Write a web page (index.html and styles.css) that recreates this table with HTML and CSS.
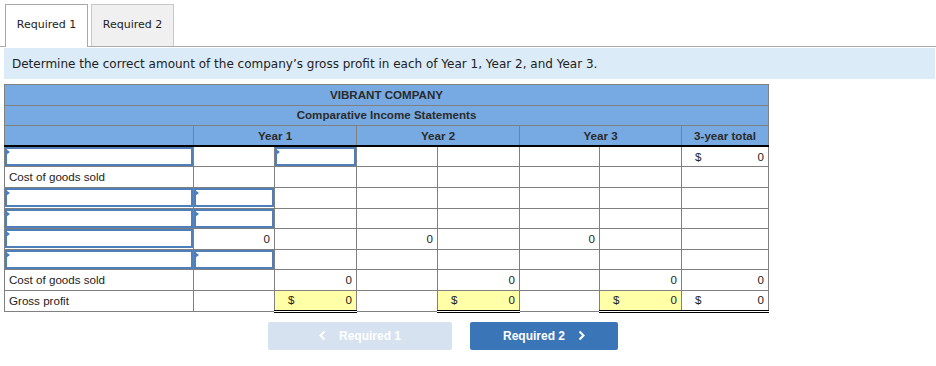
FILE: index.html
```html
<!DOCTYPE html>
<html>
<head>
<meta charset="utf-8">
<title>Gross profit</title>
<link rel="stylesheet" href="styles.css">
</head>
<body>
<div class="tabs">
  <div class="tab tab-active">Required 1</div>
  <div class="tab">Required 2</div>
</div>
<div class="instr">Determine the correct amount of the company’s gross profit in each of Year 1, Year 2, and Year 3.</div>
<table class="sheet">
  <colgroup>
    <col class="c0"><col class="c1"><col class="c2"><col class="c3"><col class="c4"><col class="c5"><col class="c6"><col class="c7">
  </colgroup>
  <tr class="hd"><th colspan="8">VIBRANT COMPANY</th></tr>
  <tr class="hd"><th colspan="8">Comparative Income Statements</th></tr>
  <tr class="hd yr"><th></th><th colspan="2">Year 1</th><th colspan="2">Year 2</th><th colspan="2">Year 3</th><th>3-year total</th></tr>
  <tr class="first">
    <td class="in"><div class="box"></div></td><td></td><td class="in"><div class="box"></div></td><td></td><td></td><td></td><td></td>
    <td><div class="amt"><span>$</span><span>0</span></div></td>
  </tr>
  <tr>
    <td class="lbl">Cost of goods sold</td><td></td><td></td><td></td><td></td><td></td><td></td><td></td>
  </tr>
  <tr>
    <td class="in"><div class="box"></div></td><td class="in"><div class="box"></div></td><td></td><td></td><td></td><td></td><td></td><td></td>
  </tr>
  <tr>
    <td class="in"><div class="box"></div></td><td class="in"><div class="box"></div></td><td></td><td></td><td></td><td></td><td></td><td></td>
  </tr>
  <tr>
    <td class="in"><div class="box"></div></td><td class="num bt">0</td><td></td><td class="num bt">0</td><td></td><td class="num bt">0</td><td></td><td></td>
  </tr>
  <tr>
    <td class="in"><div class="box"></div></td><td class="in"><div class="box"></div></td><td></td><td></td><td></td><td></td><td></td><td></td>
  </tr>
  <tr>
    <td class="lbl indent">Cost of goods sold</td><td></td><td class="num bt">0</td><td class="bt"></td><td class="num bt">0</td><td class="bt"></td><td class="num bt">0</td><td class="num bt">0</td>
  </tr>
  <tr>
    <td class="lbl">Gross profit</td><td></td>
    <td class="tot hl"><div class="amt"><span>$</span><span>0</span></div></td><td></td>
    <td class="tot hl"><div class="amt"><span>$</span><span>0</span></div></td><td></td>
    <td class="tot hl"><div class="amt"><span>$</span><span>0</span></div></td>
    <td class="tot"><div class="amt"><span>$</span><span>0</span></div></td>
  </tr>
</table>
<div class="nav">
  <button class="btn btn-off" type="button">
    <svg class="chev" width="7" height="11" viewBox="0 0 7 11"><polyline points="5.5,1.5 1.5,5.5 5.5,9.5" fill="none" stroke="#ffffff" stroke-width="2"/></svg>
    <span>Required 1</span>
  </button>
  <button class="btn btn-on" type="button">
    <span>Required 2</span>
    <svg class="chev" width="7" height="11" viewBox="0 0 7 11"><polyline points="1.5,1.5 5.5,5.5 1.5,9.5" fill="none" stroke="#ffffff" stroke-width="2"/></svg>
  </button>
</div>
</body>
</html>
```
FILE: styles.css
```css
* { box-sizing: border-box; }
body {
  margin: 0;
  background: #ffffff;
  color: #222222;
  font-family: "DejaVu Sans", Verdana, sans-serif;
  font-size: 11px;
}
.tabs {
  display: flex;
  align-items: flex-end;
  gap: 3px;
  padding: 4px 0 0 5px;
  border-bottom: 1px solid #ababab;
}
.tab {
  width: 83px;
  height: 42px;
  display: flex;
  align-items: center;
  justify-content: center;
  padding-bottom: 2px;
  border: 1px solid #c8c8c8;
  border-bottom: none;
  background: #f0f0f0;
  color: #222222;
}
.tab-active {
  height: 43px;
  margin-bottom: -1px;
  padding-bottom: 3px;
  background: #ffffff;
  border-color: #a8a8a8;
}
.instr {
  margin: 1px 1px 0 4px;
  height: 31px;
  padding-left: 8px;
  display: flex;
  align-items: center;
  background: #dcebf8;
  color: #222222;
  font-size: 12px;
}
.sheet {
  margin: 5px 0 0 4px;
  width: 764px;
  table-layout: fixed;
  border-collapse: collapse;
  font-family: "Liberation Sans", Arial, sans-serif;
  font-size: 11.6px;
  color: #222222;
}
.c0 { width: 189px; }
.c1 { width: 81px; }
.c2 { width: 82px; }
.c3 { width: 81px; }
.c4 { width: 82px; }
.c5 { width: 80px; }
.c6 { width: 82px; }
.c7 { width: 87px; }
.sheet tr { height: 20.6px; }
.sheet th, .sheet td {
  border: 1px solid #808080;
  padding: 0 4px;
  height: 20.6px;
  line-height: 14px;
  white-space: nowrap;
  overflow: hidden;
}
.hd th {
  background: #77aae2;
  color: #2b2b2b;
  font-weight: bold;
  text-align: center;
}
.yr th { border-bottom: 2px solid #000000; }
.first td { border-top: 2px solid #000000; }
.lbl { text-align: left; padding-left: 2px; }
.indent { padding-left: 17px; }
.num { text-align: right; }
.bt { border-top: 1px solid #000000 !important; }
.in { padding: 0 !important; }
.box {
  position: relative;
  height: 19px;
  margin: 0;
  border: 2px solid #4f7fb9;
  background: #ffffff;
}
.box::before {
  content: "";
  position: absolute;
  left: -1px;
  top: 0;
  border-top: 3px solid transparent;
  border-bottom: 3px solid transparent;
  border-left: 4px solid #4a7fc4;
}
.amt {
  display: flex;
  justify-content: space-between;
  padding-left: 9px;
}
.tot {
  border-top: 1px solid #000000 !important;
  border-bottom: 3px double #000000 !important;
}
.hl { background: #ffffa8; }
.nav {
  display: flex;
  gap: 18px;
  padding-left: 268px;
  margin-top: 9px;
}
.btn {
  height: 28px;
  border: none;
  border-radius: 2px;
  display: flex;
  align-items: center;
  justify-content: center;
  gap: 13px;
  color: #ffffff;
  font-family: "Liberation Sans", Arial, sans-serif;
  font-weight: bold;
  font-size: 12px;
  padding: 0;
}
.btn-off { width: 184px; background: #d6e2f0; }
.btn-on { width: 148px; background: #3a75b8; }
.chev { display: block; }
```
